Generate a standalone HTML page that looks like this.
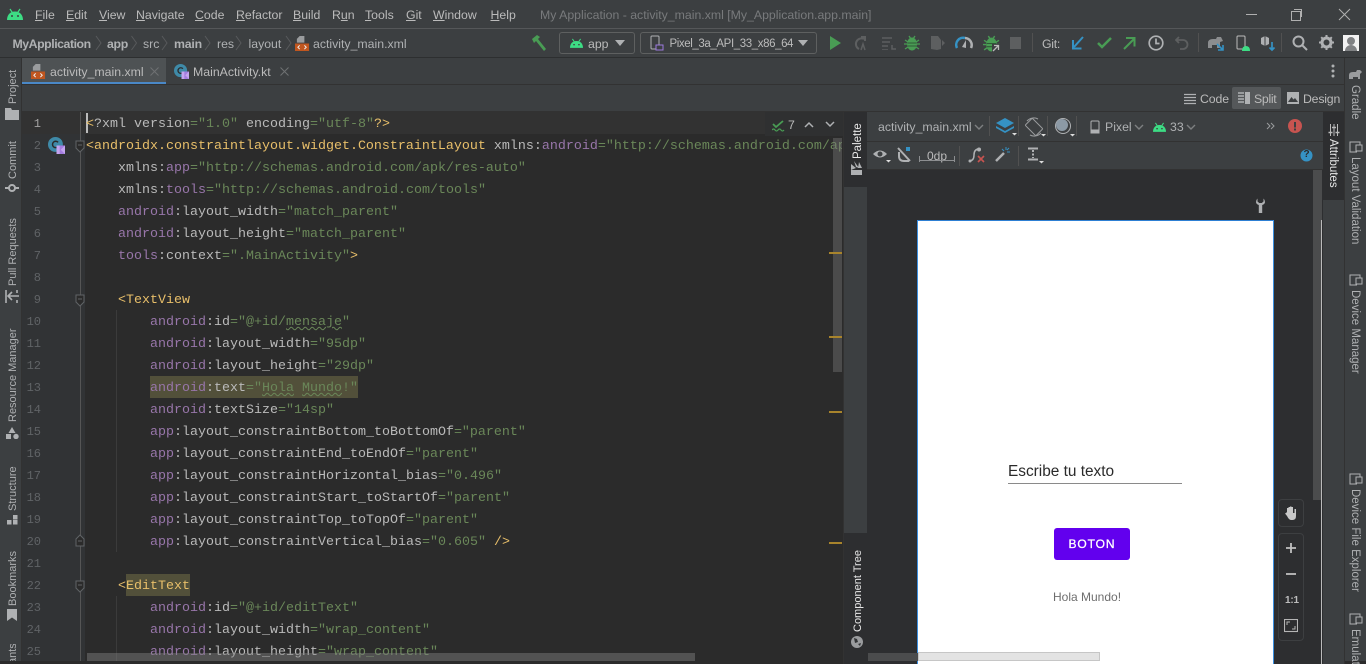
<!DOCTYPE html>
<html><head><meta charset="utf-8"><style>
html,body{margin:0;padding:0;width:1366px;height:664px;overflow:hidden;background:#3c3f41;font-family:"Liberation Sans",sans-serif;color:#bbb}
div,span.t,svg.i{position:absolute}
.t{position:absolute;white-space:nowrap;font-size:12.3px;line-height:16px;color:#afb1b3}
.v{position:absolute;white-space:nowrap;font-size:11px;line-height:14px;color:#afb1b3;writing-mode:vertical-rl;transform:rotate(180deg)}
.r{transform:none;font-size:11.5px}
.code{position:absolute;white-space:pre;font-family:"Liberation Mono",monospace;font-size:13.33px;line-height:22px;height:22px;left:86px;color:#bababa;margin-top:2px}
.n{position:absolute;left:22px;width:19px;text-align:right;font-family:"Liberation Mono",monospace;font-size:12px;line-height:22px;color:#606366;margin-top:1px}
.y{color:#e8bf6a}.p{color:#9876aa}.s{color:#6a8759}.w{color:#a9b7c6}
.sep{position:absolute;width:1px;background:#515151}
</style></head><body>
<svg width="0" height="0" style="position:absolute"><defs>
<symbol id="and" viewBox="0 0 16 12"><path d="M0 12C0 7 3 3.5 8 3.5S16 7 16 12Z" fill="#3ddc84"/><path d="M3 1l2.3 3.5M13 1l-2.3 3.5" stroke="#3ddc84" stroke-width="1.2"/><circle cx="5" cy="8" r="1" fill="#3c3f41"/><circle cx="11" cy="8" r="1" fill="#3c3f41"/></symbol>
<symbol id="xml" viewBox="0 0 16 16"><path d="M5 0h5v7H2V3Z" fill="#9a9c9e"/><rect x="0" y="8" width="15" height="8" fill="#c0561f"/><path d="M5 10l-2 2 2 2M10 10l2 2-2 2" fill="none" stroke="#eee" stroke-width="1"/></symbol>
<symbol id="kt" viewBox="0 0 16 16"><circle cx="7" cy="7" r="7" fill="#3f8aa8"/><path d="M9.5 5A3 3 0 1 0 9.5 9" stroke="#2b2b2b" stroke-width="1.4" fill="none"/><rect x="8" y="8" width="8" height="8" fill="#c4a5ef"/><path d="M16 8l-4 4 4 4h-5V8Z" fill="#a47de0"/></symbol>
<symbol id="bug" viewBox="0 0 16 16"><ellipse cx="8" cy="9" rx="5" ry="6.5" fill="#499c54"/><path d="M1 5l3 2M15 5l-3 2M0 9h3M16 9h-3M1 14l3-2M15 14l-3-2M5 1l2 3M11 1L9 4" stroke="#499c54" stroke-width="1.3"/><path d="M3.5 8h9M3.5 11h9" stroke="#2f5a36" stroke-width="1"/></symbol>
</defs></svg>

<!-- title row -->
<svg class="i" style="left:7px;top:8px" width="16" height="12"><use href="#and"/></svg>
<span class="t" style="left:35px;top:7px;color:#bbb"><u>F</u>ile</span>
<span class="t" style="left:66px;top:7px;color:#bbb"><u>E</u>dit</span>
<span class="t" style="left:99px;top:7px;color:#bbb"><u>V</u>iew</span>
<span class="t" style="left:136px;top:7px;color:#bbb"><u>N</u>avigate</span>
<span class="t" style="left:195px;top:7px;color:#bbb"><u>C</u>ode</span>
<span class="t" style="left:236px;top:7px;color:#bbb"><u>R</u>efactor</span>
<span class="t" style="left:293px;top:7px;color:#bbb"><u>B</u>uild</span>
<span class="t" style="left:332px;top:7px;color:#bbb">R<u>u</u>n</span>
<span class="t" style="left:365px;top:7px;color:#bbb"><u>T</u>ools</span>
<span class="t" style="left:406px;top:7px;color:#bbb"><u>G</u>it</span>
<span class="t" style="left:433px;top:7px;color:#bbb"><u>W</u>indow</span>
<span class="t" style="left:490.500px;top:7px;color:#bbb"><u>H</u>elp</span>
<span class="t" style="left:540px;top:7px;color:#787a7c;font-size:12.3px">My Application - activity_main.xml [My_Application.app.main]</span>
<div style="left:1246px;top:14px;width:11px;height:1px;background:#b0b0b0"></div>
<div style="left:1291px;top:11px;width:8px;height:8px;border:1px solid #b0b0b0"></div>
<div style="left:1294px;top:9px;width:7px;height:7px;border:1px solid #b0b0b0;border-left:0;border-bottom:0"></div>
<svg class="i" style="left:1338px;top:8px" width="13" height="13"><path d="M1 1l11 11M12 1L1 12" stroke="#b0b0b0" stroke-width="1"/></svg>
<div style="left:0;top:28px;width:1366px;height:1px;background:#555759"></div>

<!-- nav row -->
<span class="t" style="left:12.500px;top:36px;font-weight:bold;letter-spacing:-.45px">MyApplication</span>
<span class="t" style="left:107px;top:36px;font-weight:bold;letter-spacing:-.3px">app</span>
<span class="t" style="left:143px;top:36px">src</span>
<span class="t" style="left:174px;top:36px;font-weight:bold;letter-spacing:-.2px">main</span>
<span class="t" style="left:217px;top:36px">res</span>
<span class="t" style="left:248.500px;top:36px">layout</span>
<svg class="i" style="left:295px;top:36px" width="15" height="15"><use href="#xml"/></svg>
<span class="t" style="left:313px;top:36px">activity_main.xml</span>
<svg class="i" style="left:92px;top:34px" width="220" height="18" fill="none" stroke="#585a5c"><path d="M4 2l5 7-5 7M39.500 2l5 7-5 7M70 2l5 7-5 7M113 2l5 7-5 7M144 2l5 7-5 7M194 2l5 7-5 7"/></svg>
<div style="left:0;top:57px;width:1366px;height:1px;background:#2d2f30"></div>

<!-- run toolbar -->
<svg class="i" style="left:531px;top:34px" width="18" height="18"><path d="M1 5l5-4 3 2-2 2 8 10-2 2-8-10-2 2Z" fill="#499c54"/></svg>
<div style="left:559px;top:32px;width:74px;height:20px;border:1px solid #5e6060;border-radius:3px"></div>
<svg class="i" style="left:570px;top:38px" width="13" height="10"><use href="#and"/></svg>
<span class="t" style="left:588px;top:36px;color:#bbb">app</span>
<svg class="i" style="left:615px;top:40px" width="10" height="6"><path d="M0 0h10L5 6Z" fill="#afb1b3"/></svg>
<div style="left:640px;top:32px;width:175px;height:20px;border:1px solid #5e6060;border-radius:3px"></div>
<svg class="i" style="left:650px;top:35px" width="16" height="17" fill="none"><rect x="1" y="1" width="8" height="13" rx="1" stroke="#afb1b3"/><rect x="6" y="10" width="7" height="5" stroke="#9c7ae0" fill="#3c3f41"/></svg>
<span class="t" style="left:669.500px;top:36px;font-size:11.500px;color:#bbb;letter-spacing:-.4px">Pixel_3a_API_33_x86_64</span>
<svg class="i" style="left:798px;top:40px" width="10" height="6"><path d="M0 0h10L5 6Z" fill="#afb1b3"/></svg>
<svg class="i" style="left:829px;top:36px" width="13" height="14"><path d="M1 0l11 7L1 14Z" fill="#499c54"/></svg>
<svg class="i" style="left:852px;top:36px" width="15" height="15" fill="none" stroke="#5d5f60" stroke-width="2"><path d="M12 3A5.500 5.500 0 1 0 7 13"/><path d="M9 1h4v4" /><path d="M9 14l2-6 2 6" stroke-width="1.500"/></svg>
<svg class="i" style="left:882px;top:37px" width="15" height="13" stroke="#5d5f60" stroke-width="1.500" fill="none"><path d="M0 1h10M0 5h8M0 9h6M0 13h6M10 8v4h4"/></svg>
<svg class="i" style="left:904px;top:35px" width="16" height="16"><use href="#bug"/></svg>
<svg class="i" style="left:930px;top:35px" width="16" height="16"><path d="M1 1h7l3 4v9l-4 1-6-1Z" fill="#5d5f60"/><path d="M12 5l3 3-3 3Z" fill="#5d5f60"/></svg>
<svg class="i" style="left:955px;top:35px" width="18" height="16" fill="none"><path d="M2 13A7 7 0 0 1 10 3" stroke="#3592c4" stroke-width="2.500"/><path d="M10 3A7 7 0 0 1 16 13" stroke="#aeb0b2" stroke-width="2.500"/><path d="M7 12l4-7 0 8Z" fill="#aeb0b2"/></svg>
<svg class="i" style="left:983px;top:35px" width="17" height="17"><use href="#bug"/><path d="M9 9h8v8H9Z" fill="#3c3f41"/><path d="M10 16l5-5M11 10.500h4.500V15" stroke="#bbb" stroke-width="1.300" fill="none"/></svg>
<div style="left:1010px;top:37px;width:11px;height:12px;background:#5d5f60"></div>
<div class="sep" style="left:1032px;top:33px;height:19px"></div>
<span class="t" style="left:1042px;top:36px;color:#bbb;letter-spacing:-.3px">Git:</span>
<svg class="i" style="left:1071px;top:36px" width="14" height="14"><path d="M12 1L3 11M2 4v8.500h8.500" stroke="#3592c4" stroke-width="2" fill="none"/></svg>
<svg class="i" style="left:1097px;top:37px" width="15" height="12"><path d="M1 6l4 4 9-9" stroke="#499c54" stroke-width="2.500" fill="none"/></svg>
<svg class="i" style="left:1122px;top:36px" width="14" height="14"><path d="M2 13L12 3M4 2h8.500v8.500" stroke="#499c54" stroke-width="2" fill="none"/></svg>
<svg class="i" style="left:1148px;top:35px" width="16" height="16" fill="none" stroke="#afb1b3" stroke-width="1.700"><circle cx="8" cy="8" r="6.800"/><path d="M8 3.500V8.500H11.500"/></svg>
<svg class="i" style="left:1175px;top:36px" width="14" height="14" fill="none" stroke="#5d5f60" stroke-width="1.800"><path d="M4 1L1 4l3 3M1 4h7a4.500 4.500 0 0 1 0 9H5"/></svg>
<div class="sep" style="left:1198px;top:33px;height:19px"></div>
<svg class="i" style="left:1207px;top:35px" width="18" height="17"><path d="M1 13V8q0-4 5-4h3l1-2h4l2 4-3 1v6h-3v-3H5v3Z" fill="#8b8d8f"/><path d="M10 9l6 6M11 15h5v-5" stroke="#3592c4" stroke-width="1.600" fill="none"/></svg>
<svg class="i" style="left:1236px;top:35px" width="16" height="17"><rect x="1" y="1" width="8" height="13" rx="1" fill="none" stroke="#bbb"/><path d="M6 16q0-5 4-5t4 5Z" fill="#3ddc84"/></svg>
<svg class="i" style="left:1260px;top:35px" width="16" height="17"><path d="M1 3l4-2 4 2v6l-4 2-4-2Z" fill="#afb1b3"/><path d="M5 1v10" stroke="#3c3f41"/><path d="M12 7v8M9.500 12.500l2.500 2.500 2.500-2.500" stroke="#3592c4" stroke-width="1.700" fill="none"/></svg>
<div class="sep" style="left:1281px;top:33px;height:19px"></div>
<svg class="i" style="left:1292px;top:35px" width="16" height="16" fill="none" stroke="#afb1b3" stroke-width="2"><circle cx="6.500" cy="6.500" r="5"/><path d="M10 10l5 5"/></svg>
<svg class="i" style="left:1319px;top:35px" width="15" height="15"><circle cx="7.500" cy="7.500" r="4.500" fill="none" stroke="#afb1b3" stroke-width="3"/><path d="M7.500 0v3M7.500 12v3M0 7.500h3M12 7.500h3M2.200 2.200l2 2M10.800 10.800l2 2M2.200 12.800l2-2M10.800 4.200l2-2" stroke="#afb1b3" stroke-width="2"/></svg>
<div style="left:1343px;top:35px;width:16px;height:16px;background:#f2f2f2;overflow:hidden"><div style="left:4px;top:2px;width:8px;height:8px;border-radius:50%;background:#7f8183"></div><div style="left:2px;top:10px;width:12px;height:8px;border-radius:6px 6px 0 0;background:#7f8183"></div></div>

<!-- tab bar -->
<div style="left:22px;top:58px;width:144px;height:25px;background:#4e5254"></div>
<div style="left:22px;top:82px;width:144px;height:3px;background:#4a88c7"></div>
<div style="left:22px;top:84px;width:1322px;height:1px;background:#323232"></div>
<svg class="i" style="left:31px;top:64px" width="15" height="15"><use href="#xml"/></svg>
<span class="t" style="left:50px;top:64px;color:#bbb">activity_main.xml</span>
<svg class="i" style="left:150px;top:67px" width="9" height="9"><path d="M.5.5l8 8M8.500.5l-8 8" stroke="#6f7173"/></svg>
<svg class="i" style="left:174px;top:64px" width="15" height="15"><use href="#kt"/></svg>
<span class="t" style="left:193px;top:64px;color:#bbb;font-size:12.300px">MainActivity.kt</span>
<svg class="i" style="left:280px;top:67px" width="9" height="9"><path d="M.5.5l8 8M8.500.5l-8 8" stroke="#6f7173"/></svg>
<svg class="i" style="left:1331px;top:64px" width="4" height="14"><circle cx="2" cy="2" r="1.500" fill="#afb1b3"/><circle cx="2" cy="7" r="1.500" fill="#afb1b3"/><circle cx="2" cy="12" r="1.500" fill="#afb1b3"/></svg>

<!-- code/split/design -->
<svg class="i" style="left:1184px;top:93px" width="12" height="12" stroke="#afb1b3" stroke-width="1.300"><path d="M0 1.500h12M0 4.500h12M0 7.500h12M0 10.500h12"/></svg>
<span class="t" style="left:1200px;top:91px;color:#bbb;letter-spacing:-.1px">Code</span>
<div style="left:1232px;top:87px;width:49px;height:22px;background:#55585a;border-radius:2px"></div>
<svg class="i" style="left:1238px;top:92px" width="12" height="13"><path d="M0 1h6M0 4h6M0 7h6M0 10h6" stroke="#afb1b3" stroke-width="1.500"/><rect x="7" y="0" width="5" height="12" fill="#afb1b3"/></svg>
<span class="t" style="left:1254px;top:91px;color:#bbb;letter-spacing:-.3px">Split</span>
<svg class="i" style="left:1287px;top:92px" width="12" height="12"><rect width="12" height="12" fill="#afb1b3"/><path d="M1 10l3.500-5 2 2.500 1.500-1.500 3 4Z" fill="#3c3f41"/></svg>
<span class="t" style="left:1303px;top:91px;color:#bbb;letter-spacing:-.2px">Design</span>
<div style="left:22px;top:111px;width:1322px;height:1px;background:#323232"></div>

<!-- left strip -->
<div style="left:21px;top:58px;width:1px;height:606px;background:#323232"></div>
<span class="v" style="left:6px;top:70px;height:34px">Project</span>
<svg class="i" style="left:5px;top:108px" width="14" height="12"><path d="M0 0h6l1 2h7v10H0Z" fill="#afb1b3"/></svg>
<span class="v" style="left:6px;top:139px;height:40px">Commit</span>
<svg class="i" style="left:5px;top:182px" width="14" height="12" fill="none" stroke="#afb1b3" stroke-width="2"><circle cx="7" cy="6" r="3"/><path d="M0 6h4M10 6h4"/></svg>
<span class="v" style="left:6px;top:219px;height:67px">Pull Requests</span>
<svg class="i" style="left:5px;top:290px" width="14" height="13" fill="none" stroke="#afb1b3" stroke-width="1.600"><path d="M1 0v13M14 6H4M7 2L3 6l4 4M12 0v3M12 10v3"/></svg>
<span class="v" style="left:6px;top:329px;height:93px">Resource Manager</span>
<svg class="i" style="left:5px;top:427px" width="14" height="12"><path d="M7 0l3.500 6h-7Z" fill="#afb1b3"/><rect x="1" y="7" width="5" height="5" fill="#afb1b3"/><circle cx="11" cy="9.500" r="2.700" fill="#afb1b3"/></svg>
<span class="v" style="left:6px;top:464px;height:47px">Structure</span>
<svg class="i" style="left:7px;top:515px" width="11" height="10" fill="#afb1b3"><rect x="0" y="5" width="4.500" height="4.500"/><rect x="6" y="5" width="4.500" height="4.500"/><rect x="6" y="0" width="4.500" height="4.500"/></svg>
<span class="v" style="left:6px;top:552px;height:54px">Bookmarks</span>
<svg class="i" style="left:7px;top:609px" width="10" height="12"><path d="M0 0h10v12L5 8.500 0 12Z" fill="#afb1b3"/></svg>
<span class="v" style="left:6px;top:644px;height:20px;overflow:hidden">ants</span>

<!-- editor -->
<div style="left:22px;top:112px;width:63px;height:552px;background:#313335"></div>
<div style="left:85px;top:112px;width:758px;height:552px;background:#2b2b2b"></div>
<div style="left:22px;top:112px;width:821px;height:22px;background:#323232"></div>
<div style="left:80px;top:112px;width:1px;height:552px;background:#555"></div>
<div style="left:86px;top:113px;width:2px;height:20px;background:#bbb"></div>
<div style="left:116px;top:310px;width:1px;height:242px;background:#3b3b3b"></div>
<div style="left:116px;top:596px;width:1px;height:68px;background:#3b3b3b"></div>
<div style="left:150px;top:376px;width:208px;height:22px;background:#52503a"></div>
<div style="left:126px;top:574px;width:64px;height:22px;background:#52503a"></div>

<div class="n" style="top:112px;color:#a4a3a3">1</div><div class="n" style="top:134px">2</div><div class="n" style="top:156px">3</div><div class="n" style="top:178px">4</div><div class="n" style="top:200px">5</div><div class="n" style="top:222px">6</div><div class="n" style="top:244px">7</div><div class="n" style="top:266px">8</div><div class="n" style="top:288px">9</div><div class="n" style="top:310px">10</div><div class="n" style="top:332px">11</div><div class="n" style="top:354px">12</div><div class="n" style="top:376px">13</div><div class="n" style="top:398px">14</div><div class="n" style="top:420px">15</div><div class="n" style="top:442px">16</div><div class="n" style="top:464px">17</div><div class="n" style="top:486px">18</div><div class="n" style="top:508px">19</div><div class="n" style="top:530px">20</div><div class="n" style="top:552px">21</div><div class="n" style="top:574px">22</div><div class="n" style="top:596px">23</div><div class="n" style="top:618px">24</div><div class="n" style="top:640px">25</div>

<svg class="i" style="left:48px;top:137px" width="17" height="17"><use href="#kt"/></svg>
<svg class="i" style="left:75px;top:140px" width="11" height="13" fill="#2b2b2b" stroke="#606366"><path d="M1 1h8v7l-4 4-4-4Z"/><path d="M3 5h4"/></svg>
<svg class="i" style="left:75px;top:294px" width="11" height="13" fill="#2b2b2b" stroke="#606366"><path d="M1 1h8v7l-4 4-4-4Z"/><path d="M3 5h4"/></svg>
<svg class="i" style="left:75px;top:534px" width="11" height="13" fill="#2b2b2b" stroke="#606366"><path d="M1 12h8V5L5 1 1 5Z"/><path d="M3 7h4"/></svg>
<svg class="i" style="left:75px;top:580px" width="11" height="13" fill="#2b2b2b" stroke="#606366"><path d="M1 1h8v7l-4 4-4-4Z"/><path d="M3 5h4"/></svg>

<div style="left:85px;top:112px;width:757px;height:552px;overflow:hidden">
<div class="code" style="left:1px;top:0"><span class="y">&lt;</span>?xml version<span class="s">=</span><span class="s">"1.0"</span> encoding<span class="s">=</span><span class="s">"utf-8"</span><span class="y">?&gt;</span></div>
<div class="code" style="left:1px;top:22px"><span class="y">&lt;androidx.constraintlayout.widget.ConstraintLayout</span> xmlns:<span class="p">android</span><span class="s">="http://schemas.android.com/apk/res/android"</span></div>
<div class="code" style="left:33px;top:44px">xmlns:<span class="p">app</span><span class="s">="http://schemas.android.com/apk/res-auto"</span></div>
<div class="code" style="left:33px;top:66px">xmlns:<span class="p">tools</span><span class="s">="http://schemas.android.com/tools"</span></div>
<div class="code" style="left:33px;top:88px"><span class="p">android</span>:layout_width<span class="s">="match_parent"</span></div>
<div class="code" style="left:33px;top:110px"><span class="p">android</span>:layout_height<span class="s">="match_parent"</span></div>
<div class="code" style="left:33px;top:132px"><span class="p">tools</span>:context<span class="s">=".MainActivity"</span><span class="y">&gt;</span></div>
<div class="code" style="left:33px;top:176px"><span class="y">&lt;TextView</span></div>
<div class="code" style="left:65px;top:198px"><span class="p">android</span>:id<span class="s">="@+id/<span style="text-decoration:underline wavy #6a8759 1px">mensaje</span>"</span></div>
<div class="code" style="left:65px;top:220px"><span class="p">android</span>:layout_width<span class="s">="95dp"</span></div>
<div class="code" style="left:65px;top:242px"><span class="p">android</span>:layout_height<span class="s">="29dp"</span></div>
<div class="code" style="left:65px;top:264px"><span class="p">android</span>:text<span class="s">="<span style="text-decoration:underline wavy #6a8759 1px">Hola</span> <span style="text-decoration:underline wavy #6a8759 1px">Mundo</span>!"</span></div>
<div class="code" style="left:65px;top:286px"><span class="p">android</span>:textSize<span class="s">="14sp"</span></div>
<div class="code" style="left:65px;top:308px"><span class="p">app</span>:layout_constraintBottom_toBottomOf<span class="s">="parent"</span></div>
<div class="code" style="left:65px;top:330px"><span class="p">app</span>:layout_constraintEnd_toEndOf<span class="s">="parent"</span></div>
<div class="code" style="left:65px;top:352px"><span class="p">app</span>:layout_constraintHorizontal_bias<span class="s">="0.496"</span></div>
<div class="code" style="left:65px;top:374px"><span class="p">app</span>:layout_constraintStart_toStartOf<span class="s">="parent"</span></div>
<div class="code" style="left:65px;top:396px"><span class="p">app</span>:layout_constraintTop_toTopOf<span class="s">="parent"</span></div>
<div class="code" style="left:65px;top:418px"><span class="p">app</span>:layout_constraintVertical_bias<span class="s">="0.605"</span> <span class="y">/&gt;</span></div>
<div class="code" style="left:33px;top:462px"><span class="y">&lt;EditText</span></div>
<div class="code" style="left:65px;top:484px"><span class="p">android</span>:id<span class="s">="@+id/editText"</span></div>
<div class="code" style="left:65px;top:506px"><span class="p">android</span>:layout_width<span class="s">="wrap_content"</span></div>
<div class="code" style="left:65px;top:528px"><span class="p">android</span>:layout_height<span class="s">="wrap_content"</span></div>
</div>

<!-- inspection widget -->
<div style="left:765px;top:112px;width:78px;height:24px;background:#2f3031"></div>
<svg class="i" style="left:772px;top:120px" width="13" height="12" fill="none" stroke="#499c54" stroke-width="1.800"><path d="M1 4l3 3 7-6"/><path d="M0 10q1.500-2 3 0t3 0 3 0 3 0" stroke-width="1.200"/></svg>
<span class="t" style="left:788px;top:117px;color:#bbb">7</span>
<svg class="i" style="left:804px;top:121px" width="10" height="7" fill="none" stroke="#afb1b3" stroke-width="1.500"><path d="M1 6l4-4 4 4"/></svg>
<svg class="i" style="left:825px;top:121px" width="10" height="7" fill="none" stroke="#afb1b3" stroke-width="1.500"><path d="M1 1l4 4 4-4"/></svg>

<!-- editor scrollbar -->
<div style="left:833px;top:138px;width:9px;height:234px;background:rgba(130,130,130,.38)"></div>
<div style="left:829px;top:252px;width:13px;height:2px;background:#a8842c"></div>
<div style="left:829px;top:336px;width:13px;height:2px;background:#a8842c"></div>
<div style="left:829px;top:411px;width:13px;height:2px;background:#a8842c"></div>
<div style="left:829px;top:542px;width:13px;height:2px;background:#a8842c"></div>
<div style="left:87px;top:653px;width:608px;height:8px;background:rgba(130,130,130,.45)"></div>
<div style="left:0;top:661px;width:1366px;height:3px;background:#2b2b2b"></div>

<!-- palette strip -->
<div style="left:843px;top:112px;width:1px;height:552px;background:#323232"></div>
<div style="left:844px;top:112px;width:23px;height:552px;background:#323436"></div>
<div style="left:844px;top:112px;width:23px;height:75px;background:#2d2e30"></div>
<div style="left:844px;top:533px;width:23px;height:131px;background:#2d2e30"></div>
<div style="left:844px;top:187px;width:23px;height:346px;background:#3c3f41"></div>
<span class="v" style="left:851px;top:124px;height:35px;color:#e8e8e8;font-size:11.500px">Palette</span>
<svg class="i" style="left:851px;top:160px" width="11" height="16" fill="#afb1b3"><rect x="0" y="10" width="11" height="5"/><path d="M0 4l5 4-5 2ZM3 1l5 7-3-1ZM8 2l3 6H7Z"/></svg>
<span class="v" style="left:851px;top:549px;height:83px;color:#e8e8e8">Component Tree</span>
<svg class="i" style="left:851px;top:636px" width="12" height="12"><circle cx="6" cy="6" r="6" fill="#9a9c9e"/><path d="M3 2l3 1 1 3-3 1ZM7 8l3-1-1 3Z" fill="#323436"/></svg>

<!-- preview toolbars -->
<div style="left:867px;top:112px;width:456px;height:58px;background:#3c3f41"></div>
<div style="left:867px;top:141px;width:456px;height:1px;background:#323232"></div>
<div style="left:867px;top:169px;width:456px;height:1px;background:#323232"></div>
<span class="t" style="left:878px;top:119px;color:#afb1b3">activity_main.xml</span>
<svg class="i" style="left:974px;top:124px" width="10" height="6" fill="none" stroke="#7d7f81" stroke-width="1.400"><path d="M1 1l4 4 4-4"/></svg>
<div class="sep" style="left:989px;top:116px;height:20px"></div>
<svg class="i" style="left:996px;top:118px" width="22" height="20"><path d="M9 0l9 5-9 5-9-5Z" fill="#3592c4"/><path d="M0 8l9 5 9-5v2l-9 5-9-5Z" fill="#3592c4"/><path d="M16 15h5l-2.500 2.500Z" fill="#ddd"/></svg>
<div class="sep" style="left:1018px;top:116px;height:20px"></div>
<svg class="i" style="left:1025px;top:117px" width="22" height="21" fill="none" stroke="#9a9c9e"><rect x="4" y="2.500" width="10" height="15" rx="1" transform="rotate(-45 9 10)"/><path d="M2 4A9 9 0 0 1 13 2M16 16A9 9 0 0 1 5 18"/><path d="M16 17h5l-2.500 2.500Z" fill="#ddd" stroke="none"/></svg>
<div class="sep" style="left:1047px;top:116px;height:20px"></div>
<svg class="i" style="left:1055px;top:118px" width="21" height="20"><circle cx="8" cy="8" r="7.500" fill="none" stroke="#afb1b3"/><circle cx="7" cy="7" r="6" fill="#8c9aa6"/><path d="M15 16h5l-2.500 2.500Z" fill="#ddd"/></svg>
<div class="sep" style="left:1076px;top:116px;height:20px"></div>
<svg class="i" style="left:1090px;top:120px" width="10" height="14" fill="none" stroke="#afb1b3"><rect x="1" y="1" width="8" height="12" rx="1"/><rect x="1" y="10" width="8" height="3" fill="#afb1b3"/></svg>
<span class="t" style="left:1105px;top:119px;color:#afb1b3">Pixel</span>
<svg class="i" style="left:1134px;top:124px" width="10" height="6" fill="none" stroke="#7d7f81" stroke-width="1.400"><path d="M1 1l4 4 4-4"/></svg>
<svg class="i" style="left:1153px;top:122px" width="13" height="10"><use href="#and"/></svg>
<span class="t" style="left:1170px;top:119px;color:#afb1b3">33</span>
<svg class="i" style="left:1186px;top:124px" width="10" height="6" fill="none" stroke="#7d7f81" stroke-width="1.400"><path d="M1 1l4 4 4-4"/></svg>
<svg class="i" style="left:1266px;top:122px" width="10" height="8" fill="none" stroke="#9a9c9e"><path d="M1 1l3 3-3 3M5 1l3 3-3 3"/></svg>
<svg class="i" style="left:1288px;top:119px" width="14" height="14"><circle cx="7" cy="7" r="7" fill="#c75450"/><rect x="6" y="3" width="2" height="5.500" fill="#3c3f41"/><rect x="6" y="9.500" width="2" height="2" fill="#3c3f41"/></svg>

<svg class="i" style="left:873px;top:148px" width="18" height="16"><path d="M0 6q7-7 14 0-7 7-14 0Z" fill="#afb1b3"/><circle cx="7" cy="6" r="2.500" fill="#3c3f41"/><path d="M13 12h5l-2.500 2.500Z" fill="#ddd"/></svg>
<svg class="i" style="left:896px;top:147px" width="16" height="16" fill="none" stroke="#afb1b3" stroke-width="2"><path d="M2 1l12 13M3 5v4q0 5 5 5h5"/><rect x="10" y="0" width="4" height="4" fill="#3592c4" stroke="none"/></svg>
<span class="t" style="left:927px;top:148px;color:#bbb;font-size:12px">0dp</span>
<svg class="i" style="left:919px;top:156px" width="36" height="6" fill="none" stroke="#8c8e90"><path d="M.5 0v6M35.500 0v6M0 4.500h36"/></svg>
<div class="sep" style="left:959px;top:146px;height:20px"></div>
<svg class="i" style="left:968px;top:147px" width="18" height="16" fill="none"><path d="M1 14q5 0 5-6t5-6" stroke="#afb1b3" stroke-width="1.500"/><circle cx="11" cy="2.500" r="2" fill="#afb1b3"/><circle cx="2" cy="14" r="1.500" fill="#afb1b3"/><path d="M10 9l6 6M16 9l-6 6" stroke="#c75450" stroke-width="1.600"/></svg>
<svg class="i" style="left:995px;top:147px" width="16" height="15" fill="none"><path d="M1 14L9 6" stroke="#afb1b3" stroke-width="2.500"/><path d="M11 0v3M15 5h-3M14 1l-2 2M7 2l2 2" stroke="#3592c4"/></svg>
<div class="sep" style="left:1018px;top:146px;height:20px"></div>
<svg class="i" style="left:1028px;top:147px" width="17" height="18" fill="none" stroke="#afb1b3"><path d="M0 1.500h10M0 12.500h10" stroke-width="2"/><path d="M5 3v8" stroke-dasharray="2 1.500" stroke-width="2"/><path d="M11 14h5l-2.500 2.500Z" fill="#ddd" stroke="none"/></svg>
<svg class="i" style="left:1300px;top:149px" width="13" height="13"><circle cx="6.500" cy="6.500" r="6" fill="#3592c4"/></svg>
<span class="t" style="left:1303.500px;top:148px;font-size:10px;font-weight:bold;color:#2b2b2b;line-height:14px">?</span>

<!-- canvas -->
<div style="left:867px;top:170px;width:456px;height:494px;background:#2d2e30"></div>
<svg class="i" style="left:1256px;top:198px" width="9" height="15"><path d="M1.500.5V3.500L3.200 5H5.800L7.500 3.500V.5Q9 2 9 4 9 6 6.200 7V15H2.800V7Q0 6 0 4 0 2 1.500.5Z" fill="#aeb0b2"/></svg>
<div style="left:918px;top:220px;width:356px;height:444px;background:#fff;border-top:1px solid #2d7fd3;box-sizing:border-box"></div>
<div style="left:1273px;top:220px;width:1px;height:444px;background:#3b8fe0"></div>
<div style="left:917px;top:220px;width:1px;height:444px;background:#3b8fe0"></div>
<span class="t" style="left:1008px;top:463px;font-size:15.400px;line-height:18px;color:#2a2a2a">Escribe tu texto</span>
<div style="left:1008px;top:483px;width:174px;height:1px;background:#8a8a8a"></div>
<div style="left:1054px;top:528px;width:76px;height:32px;background:#6200ee;border-radius:3px"></div>
<span class="t" style="left:1054px;top:537px;width:76px;text-align:center;font-size:12px;line-height:15px;color:#fff;letter-spacing:.9px;-webkit-text-stroke:.3px #fff">BOTON</span>
<span class="t" style="left:1053px;top:589px;font-size:12px;color:#6e6e6e">Hola Mundo!</span>

<!-- canvas controls -->
<div style="left:1278px;top:499px;width:26px;height:28px;border:1px solid #3d3f41;border-radius:4px;box-sizing:border-box"></div>
<svg class="i" style="left:1284px;top:506px" width="15" height="15"><path d="M3 6V2h1.500v4-5H6v5-5.500h1.500V6 1H9v6h1.500V3H12v7q0 4-3.500 4H7Q5 14 3 10L1 7.500 2 7Z" fill="#c8c8c8"/></svg>
<div style="left:1278px;top:533px;width:26px;height:108px;border:1px solid #3d3f41;border-radius:4px;box-sizing:border-box"></div>
<svg class="i" style="left:1285px;top:542px" width="12" height="12"><path d="M6 1v10M1 6h10" stroke="#c0c0c0" stroke-width="1.800"/></svg>
<div style="left:1286px;top:573px;width:10px;height:2px;background:#b0b0b0"></div>
<span class="t" style="left:1285px;top:593px;font-size:10px;font-weight:bold;color:#bdbdbd;letter-spacing:-.2px">1:1</span>
<svg class="i" style="left:1284px;top:619px" width="14" height="14" fill="none" stroke="#b5b5b5"><rect x=".5" y=".5" width="13" height="12" stroke-width="1.100"/><path d="M3 6V3h3M11 7v3H8"/></svg>

<!-- preview scrollbars -->
<div style="left:1313px;top:170px;width:9px;height:330px;background:#4b4c4d"></div>
<div style="left:1321px;top:220px;width:1px;height:444px;background:#bbb"></div>
<div style="left:868px;top:653px;width:50px;height:8px;background:#4b4c4d"></div>
<div style="left:918px;top:652px;width:182px;height:9px;background:#e3e3e3;box-sizing:border-box;border:1px solid #c6c6c6"></div>

<!-- attributes strip -->
<div style="left:1323px;top:112px;width:21px;height:552px;background:#3c3f41"></div>
<div style="left:1323px;top:112px;width:21px;height:88px;background:#2d2e30"></div>
<svg class="i" style="left:1328px;top:124px" width="12" height="12" stroke="#bbb"><path d="M2.500 0v12M6 0v12M9.500 0v12" /><path d="M.5 8.500h4M4 3.500h4M7.500 8.500h4" stroke-width="1.500"/></svg>
<span class="v r" style="left:1326px;top:139px;height:50px;color:#e8e8e8">Attributes</span>

<!-- right strip -->
<div style="left:1344px;top:58px;width:1px;height:606px;background:#323232"></div>
<svg class="i" style="left:1349px;top:68px" width="14" height="12"><path d="M0 11V7q0-3 4-3h3L8 2h3l2 2-2 2v5H9V9H4v2Z" fill="#9a9c9e"/></svg>
<span class="v r" style="left:1348px;top:85px;height:36px">Gradle</span>
<svg class="i" style="left:1349px;top:140px" width="14" height="14" fill="none" stroke="#afb1b3"><path d="M8 12H1V2h10v3"/><rect x="7" y="5" width="6" height="6"/></svg>
<span class="v r" style="left:1348px;top:157px;height:87px">Layout Validation</span>
<svg class="i" style="left:1349px;top:273px" width="14" height="14" fill="none" stroke="#afb1b3"><path d="M8 12H1V2h10v3"/><rect x="7" y="5" width="6" height="6"/></svg>
<span class="v r" style="left:1348px;top:290px;height:80px">Device Manager</span>
<svg class="i" style="left:1349px;top:472px" width="14" height="14" fill="none" stroke="#afb1b3"><path d="M8 12H1V2h10v3"/><rect x="7" y="5" width="6" height="6"/></svg>
<span class="v r" style="left:1348px;top:489px;height:93px">Device File Explorer</span>
<svg class="i" style="left:1349px;top:612px" width="14" height="14" fill="none" stroke="#afb1b3"><path d="M8 12H1V2h10v3"/><rect x="7" y="5" width="6" height="6"/></svg>
<span class="v r" style="left:1348px;top:629px;height:35px;overflow:hidden">Emulator</span>
</body></html>
